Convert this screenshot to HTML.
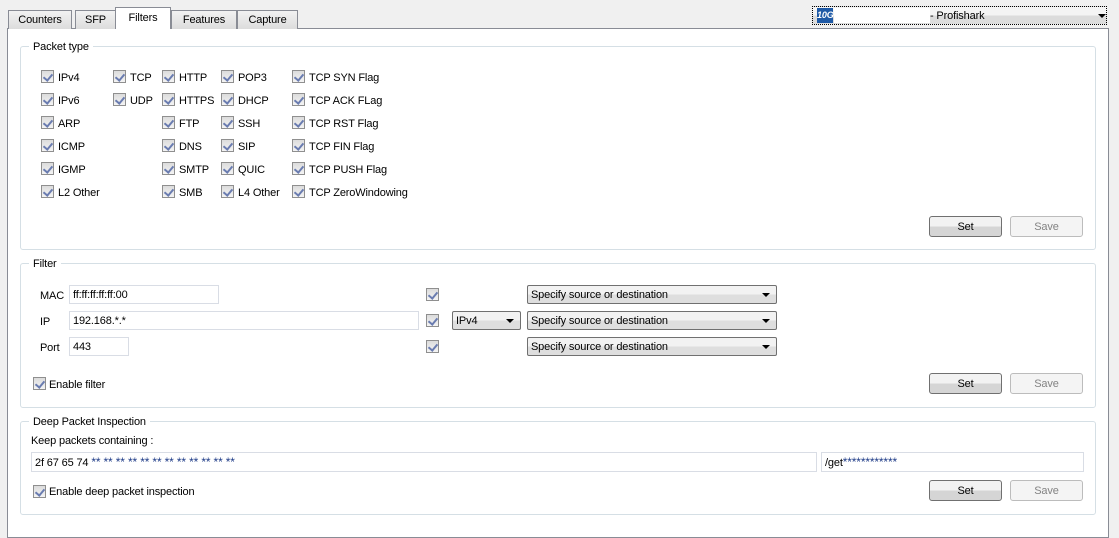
<!DOCTYPE html>
<html><head><style>
*{box-sizing:border-box;margin:0;padding:0}
body{width:1119px;height:530px;background:#f0f0f0;font:11px "Liberation Sans",sans-serif;letter-spacing:-0.15px;color:#000;position:relative;overflow:hidden}
.a{position:absolute}
.tab{position:absolute;top:10px;height:19px;border:1px solid #898c95;border-bottom:none;background:linear-gradient(#f2f2f2,#dcdcdc);text-align:center;line-height:18px}
.panel{position:absolute;left:7px;top:28px;width:1102px;height:510px;background:#fff;border:1px solid #898c95}
.grp{position:absolute;border:1px solid #d5dfe5;border-radius:3px}
.gl{position:absolute;background:#fff;padding:0 4px;top:-7px;left:8px;line-height:14px}
.cb{position:absolute;width:13px;height:13px;border:1px solid #8f8f8f;background:linear-gradient(#dcdcdc,#f4f4f4)}
.cb::after{content:"";position:absolute;left:3px;top:1px;width:4px;height:7px;border:solid #6a7cb0;border-width:0 2px 2px 0;transform:rotate(40deg)}
.lb{position:absolute;line-height:14px;margin-top:1px}
.btn{position:absolute;width:73px;height:21px;border:1px solid #707070;border-radius:3px;background:linear-gradient(#f2f2f2 50%,#d5d5d5 50%);text-align:center;line-height:20px}
.btn.d{border-color:#bcbcbc;background:#f4f4f4;color:#838383}
.in{position:absolute;height:19px;border:1px solid #d9dde5;background:#fff;padding-left:3px;line-height:18px}
.sel{position:absolute;height:19px;border:1px solid #707070;border-radius:2px;background:linear-gradient(#f2f2f2 50%,#dedede 50%);padding-left:3px;line-height:18px}
.sel::after{content:"";position:absolute;right:6px;top:7px;border:4px solid transparent;border-top:4px solid #000;border-bottom:0}
.st{color:#1f3c88;font-size:12px}
</style></head><body>
<div class="panel"></div>
<div class="tab" style="left:8px;width:64px">Counters</div>
<div class="tab" style="left:75px;width:41px">SFP</div>
<div class="tab" style="left:171px;width:66px">Features</div>
<div class="tab" style="left:237px;width:61px">Capture</div>
<div class="tab" style="left:115px;top:7px;height:22px;width:56px;background:#fff;line-height:20px">Filters</div>

<div class="a" style="left:812px;top:6px;width:295px;height:19px;border:1px dotted #000;background:linear-gradient(#f4f4f4 50%,#dcdcdc 50%)"></div>
<div class="a" style="left:817px;top:8px;width:16px;height:15px;background:#1f5aa6;color:#fff;font:italic bold 9px 'Liberation Sans',sans-serif;line-height:15px;text-align:center">10G</div>
<div class="a" style="left:834px;top:8px;width:96px;height:15px;background:#fff"></div>
<div class="a" style="left:930px;top:9px;line-height:15px">- Profishark</div>
<div class="a" style="left:1098px;top:14px;border:4px solid transparent;border-top:4px solid #000;border-bottom:0"></div>

<div class="grp" style="left:20px;top:46px;width:1076px;height:204px"><div class="gl">Packet type</div></div>
<div class="grp" style="left:20px;top:263px;width:1076px;height:145px"><div class="gl">Filter</div></div>
<div class="grp" style="left:20px;top:421px;width:1076px;height:94px"><div class="gl">Deep Packet Inspection</div></div>

<div class="cb" style="left:41px;top:70px"></div><div class="lb" style="left:58px;top:70px">IPv4</div>
<div class="cb" style="left:41px;top:93px"></div><div class="lb" style="left:58px;top:93px">IPv6</div>
<div class="cb" style="left:41px;top:116px"></div><div class="lb" style="left:58px;top:116px">ARP</div>
<div class="cb" style="left:41px;top:139px"></div><div class="lb" style="left:58px;top:139px">ICMP</div>
<div class="cb" style="left:41px;top:162px"></div><div class="lb" style="left:58px;top:162px">IGMP</div>
<div class="cb" style="left:41px;top:185px"></div><div class="lb" style="left:58px;top:185px">L2 Other</div>
<div class="cb" style="left:113px;top:70px"></div><div class="lb" style="left:130px;top:70px">TCP</div>
<div class="cb" style="left:113px;top:93px"></div><div class="lb" style="left:130px;top:93px">UDP</div>
<div class="cb" style="left:162px;top:70px"></div><div class="lb" style="left:179px;top:70px">HTTP</div>
<div class="cb" style="left:162px;top:93px"></div><div class="lb" style="left:179px;top:93px">HTTPS</div>
<div class="cb" style="left:162px;top:116px"></div><div class="lb" style="left:179px;top:116px">FTP</div>
<div class="cb" style="left:162px;top:139px"></div><div class="lb" style="left:179px;top:139px">DNS</div>
<div class="cb" style="left:162px;top:162px"></div><div class="lb" style="left:179px;top:162px">SMTP</div>
<div class="cb" style="left:162px;top:185px"></div><div class="lb" style="left:179px;top:185px">SMB</div>
<div class="cb" style="left:221px;top:70px"></div><div class="lb" style="left:238px;top:70px">POP3</div>
<div class="cb" style="left:221px;top:93px"></div><div class="lb" style="left:238px;top:93px">DHCP</div>
<div class="cb" style="left:221px;top:116px"></div><div class="lb" style="left:238px;top:116px">SSH</div>
<div class="cb" style="left:221px;top:139px"></div><div class="lb" style="left:238px;top:139px">SIP</div>
<div class="cb" style="left:221px;top:162px"></div><div class="lb" style="left:238px;top:162px">QUIC</div>
<div class="cb" style="left:221px;top:185px"></div><div class="lb" style="left:238px;top:185px">L4 Other</div>
<div class="cb" style="left:292px;top:70px"></div><div class="lb" style="left:309px;top:70px">TCP SYN Flag</div>
<div class="cb" style="left:292px;top:93px"></div><div class="lb" style="left:309px;top:93px">TCP ACK FLag</div>
<div class="cb" style="left:292px;top:116px"></div><div class="lb" style="left:309px;top:116px">TCP RST Flag</div>
<div class="cb" style="left:292px;top:139px"></div><div class="lb" style="left:309px;top:139px">TCP FIN Flag</div>
<div class="cb" style="left:292px;top:162px"></div><div class="lb" style="left:309px;top:162px">TCP PUSH Flag</div>
<div class="cb" style="left:292px;top:185px"></div><div class="lb" style="left:309px;top:185px">TCP ZeroWindowing</div>
<div class="btn" style="left:929px;top:216px">Set</div>
<div class="btn d" style="left:1010px;top:216px">Save</div>

<div class="lb" style="left:40px;top:288px">MAC</div>
<div class="in" style="left:69px;top:285px;width:150px">ff:ff:ff:ff:ff:00</div>
<div class="lb" style="left:40px;top:314px">IP</div>
<div class="in" style="left:69px;top:311px;width:350px">192.168.*.*</div>
<div class="lb" style="left:40px;top:340px">Port</div>
<div class="in" style="left:69px;top:337px;width:60px">443</div>
<div class="cb" style="left:426px;top:288px"></div>
<div class="cb" style="left:426px;top:314px"></div>
<div class="cb" style="left:426px;top:340px"></div>
<div class="sel" style="left:452px;top:311px;width:69px">IPv4</div>
<div class="sel" style="left:527px;top:285px;width:250px">Specify source or destination</div>
<div class="sel" style="left:527px;top:311px;width:250px">Specify source or destination</div>
<div class="sel" style="left:527px;top:337px;width:250px">Specify source or destination</div>
<div class="cb" style="left:33px;top:377px"></div><div class="lb" style="left:49px;top:377px">Enable filter</div>
<div class="btn" style="left:929px;top:373px">Set</div>
<div class="btn d" style="left:1010px;top:373px">Save</div>

<div class="lb" style="left:31px;top:433px">Keep packets containing :</div>
<div class="in" style="left:31px;top:452px;width:786px;height:20px;line-height:19px">2f 67 65 74 <span class="st">** ** ** ** ** ** ** ** ** ** ** **</span></div>
<div class="in" style="left:821px;top:452px;width:263px;height:20px;line-height:19px">/get<span class="st">************</span></div>
<div class="cb" style="left:33px;top:485px"></div><div class="lb" style="left:49px;top:484px">Enable deep packet inspection</div>
<div class="btn" style="left:929px;top:480px">Set</div>
<div class="btn d" style="left:1010px;top:480px">Save</div>
</body></html>
